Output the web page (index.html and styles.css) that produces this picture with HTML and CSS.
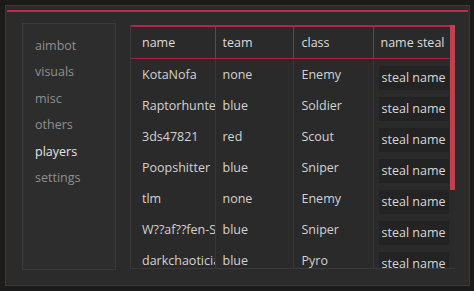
FILE: index.html
```html
<!doctype html>
<html lang="en">
    <head>
        <title>Players</title>
        <link rel="stylesheet" href="styles.css">
    </head>
    <body>
        <div class="window">
            <div class="accent-bar"></div>
            <div class="window-body">
                <div class="sidebar">
                    <div class="nav-item">aimbot</div>
                    <div class="nav-item">visuals</div>
                    <div class="nav-item">misc</div>
                    <div class="nav-item">others</div>
                    <div class="nav-item active">players</div>
                    <div class="nav-item">settings</div>
                </div>
                <div class="table-container">
                    <div class="table-scroll">
                        <table class="players-table">
                            <colgroup>
                                <col class="col-name">
                                <col class="col-team">
                                <col class="col-class">
                                <col class="col-steal">
                            </colgroup>
                            <thead>
                                <tr>
                                    <th>name</th>
                                    <th>team</th>
                                    <th>class</th>
                                    <th>name steal</th>
                                </tr>
                            </thead>
                            <tbody>
                                <tr>
                                    <td>KotaNofa</td>
                                    <td>none</td>
                                    <td>Enemy</td>
                                    <td><button class="steal">steal name</button></td>
                                </tr>
                                <tr>
                                    <td>Raptorhunter</td>
                                    <td>blue</td>
                                    <td>Soldier</td>
                                    <td><button class="steal">steal name</button></td>
                                </tr>
                                <tr>
                                    <td>3ds47821</td>
                                    <td>red</td>
                                    <td>Scout</td>
                                    <td><button class="steal">steal name</button></td>
                                </tr>
                                <tr>
                                    <td>Poopshitter</td>
                                    <td>blue</td>
                                    <td>Sniper</td>
                                    <td><button class="steal">steal name</button></td>
                                </tr>
                                <tr>
                                    <td>tlm</td>
                                    <td>none</td>
                                    <td>Enemy</td>
                                    <td><button class="steal">steal name</button></td>
                                </tr>
                                <tr>
                                    <td>W??af??fen-SS</td>
                                    <td>blue</td>
                                    <td>Sniper</td>
                                    <td><button class="steal">steal name</button></td>
                                </tr>
                                <tr>
                                    <td>darkchaotician</td>
                                    <td>blue</td>
                                    <td>Pyro</td>
                                    <td><button class="steal">steal name</button></td>
                                </tr>
                                <tr>
                                    <td>medicbot</td>
                                    <td>red</td>
                                    <td>Medic</td>
                                    <td><button class="steal">steal name</button></td>
                                </tr>
                            </tbody>
                        </table>
                    </div>
                    <div class="scroll-track">
                        <div class="scroll-thumb"></div>
                    </div>
                </div>
            </div>
        </div>
    </body>
</html>
```

FILE: styles.css
```css
body {
    margin: 0;
    width: 474px;
    height: 291px;
    background: #1d1b1a;
    font-family: "Open Sans", "DejaVu Sans", sans-serif;
    font-size: 12.5px;
    overflow: hidden;
}
.window {
    margin: 5px 0 0 5px;
    width: 463px;
    height: 279px;
    background: #2b2b2b;
    border: 1px solid #3a3a3a;
}
.accent-bar {
    height: 2px;
    margin: 4px 1px 0 1px;
    background: #c42a4c;
}
.window-body {
    display: flex;
    padding: 11px 0 0 16px;
    gap: 14px;
}
.sidebar {
    width: 92px;
    height: 236px;
    background: #2d2d2d;
    border: 1px solid #3b3b3b;
    padding-top: 9px;
    box-sizing: content-box;
}
.nav-item {
    height: 26.4px;
    line-height: 26px;
    padding-left: 12px;
    color: #8f8f8f;
}
.nav-item.active {
    color: #e4e4e4;
}
.table-container {
    display: flex;
    margin-top: 2px;
    width: 325px;
    height: 244px;
    background: #2a2a2a;
    border-left: 1px solid #3a3a3a;
    border-bottom: 1px solid #3a3a3a;
    box-sizing: border-box;
}
.table-scroll {
    width: 320px;
    overflow: hidden;
}
.players-table {
    border-collapse: collapse;
    table-layout: fixed;
    width: 320px;
    color: #d2d2d2;
}
.col-name { width: 84px; }
.col-team { width: 78px; }
.col-class { width: 80px; }
.col-steal { width: 78px; }
.players-table th,
.players-table td {
    box-sizing: border-box;
    text-align: left;
    font-weight: normal;
    padding: 0 0 0 7px;
    border-left: 1px solid #6a1e32;
    white-space: nowrap;
    overflow: hidden;
}
.players-table th:first-child,
.players-table td:first-child {
    border-left: none;
    padding-left: 11px;
}
.players-table th:nth-child(3),
.players-table td:nth-child(3) {
    padding-left: 8px;
}
.players-table th {
    height: 32px;
    color: #dcdcdc;
    border-top: 2px solid #b3264a;
    border-bottom: 1px solid #a8243f;
    border-left-color: #a8243f;
}
.players-table td {
    height: 31px;
}
.players-table td:last-child {
    padding-left: 5px;
    vertical-align: top;
}
.steal {
    display: block;
    width: 70px;
    height: 24px;
    margin-top: 7px;
    padding: 0;
    background: #232323;
    border: none;
    color: #d8d8d8;
    font-family: "Open Sans", "DejaVu Sans", sans-serif;
    font-size: 12.5px;
}
.scroll-track {
    width: 5px;
}
.scroll-thumb {
    height: 165px;
    background: #c2404e;
}
```
